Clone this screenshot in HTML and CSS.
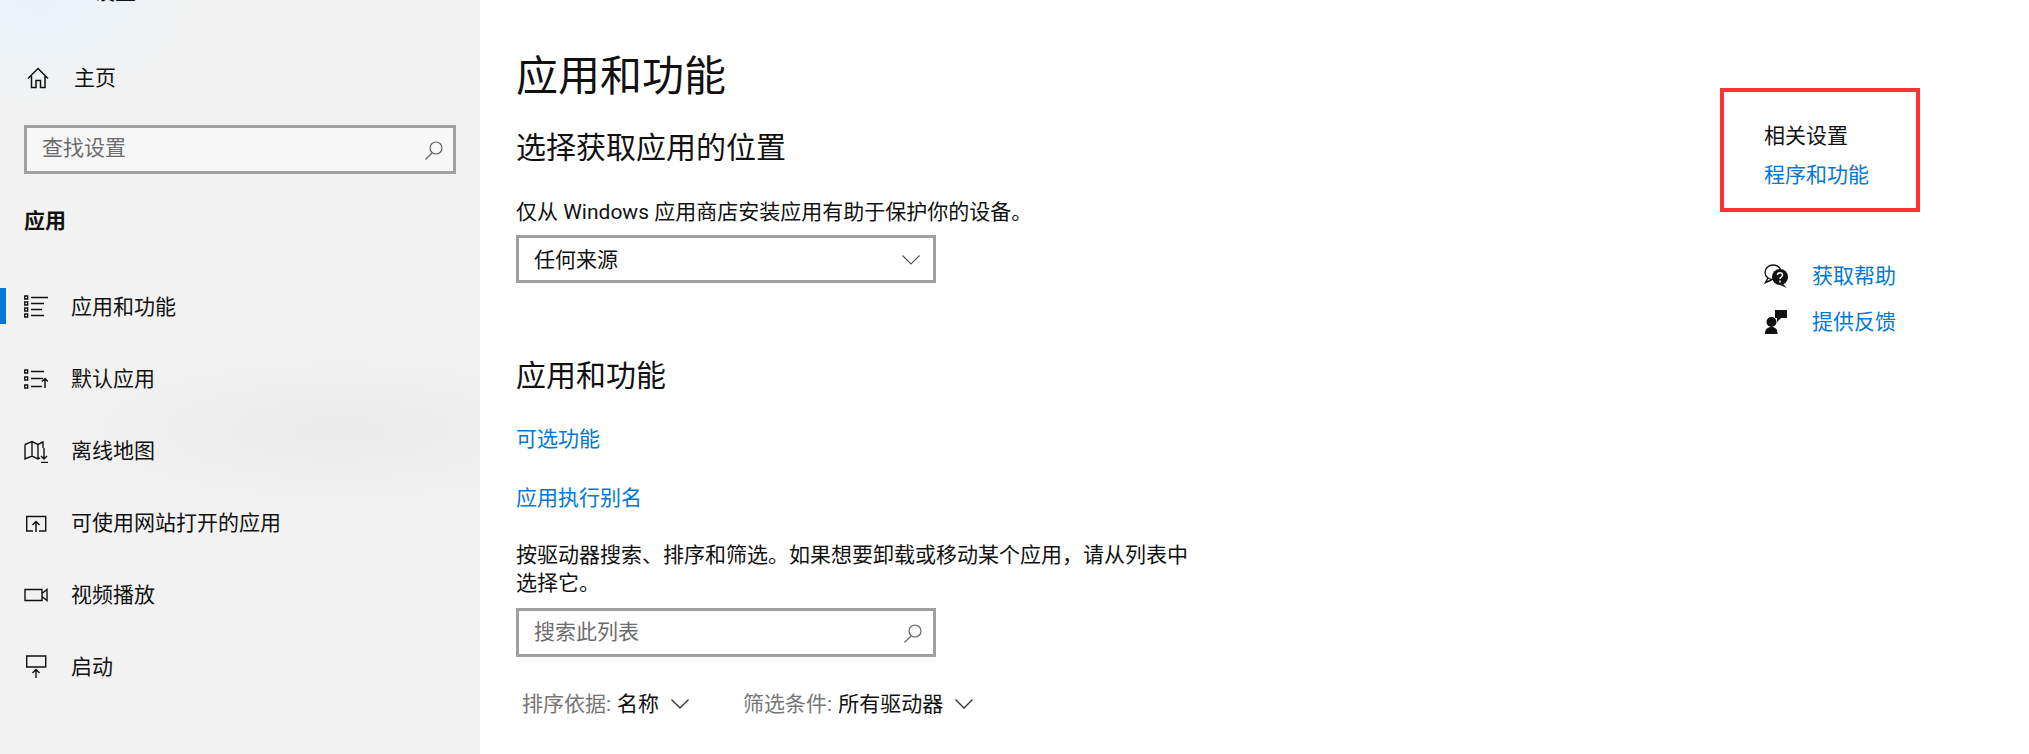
FILE: index.html
```html
<!DOCTYPE html>
<html lang="zh-CN">
<head>
<meta charset="UTF-8">
<meta name="viewport" content="width=device-width, initial-scale=1.0">
<title>应用和功能</title>
<link rel="stylesheet" href="styles.css">
</head>
<body>
<div class="window">
  <div class="sidebar">
    <div class="top-bar">
      <svg class="back-icon" width="20" height="20" viewBox="0 0 20 20"><path d="M9 3 2 10l7 7M2 10h16" fill="none" stroke="#111" stroke-width="1.5"/></svg>
      <span>设置</span>
    </div>
    <div class="home-row">
      <svg class="nav-icon" width="24" height="24" viewBox="0 0 24 24"><path d="M2 12.500 12 2.500l10 10M5.500 10v11.500h4.500v-7h4.500v7h4.500V10" fill="none" stroke="#111" stroke-width="1.500"/></svg>
      <span>主页</span>
    </div>
    <div class="search-box side-search">
      <span class="placeholder">查找设置</span>
      <svg width="20" height="20" viewBox="0 0 20 20"><circle cx="12" cy="8" r="6" fill="none" stroke="#666" stroke-width="1.200"/><path d="M8 13 1.500 19.500" stroke="#666" stroke-width="1.200"/></svg>
    </div>
    <div class="section-label">应用</div>
    <div class="nav-list">
      <div class="nav-item active">
        <svg class="nav-icon" width="24" height="24" viewBox="0 0 24 24"><path d="M.7 1h3v3h-3zM.7 7h3v3h-3zM.7 13h3v3h-3zM.7 19h3v3h-3z" fill="none" stroke="#111" stroke-width="1.300"/><path d="M7 2.500h17M7 8.500h13M7 14.500h11M7 20.500h13" stroke="#111" stroke-width="1.300"/></svg>
        <span>应用和功能</span>
      </div>
      <div class="nav-item">
        <svg class="nav-icon" width="24" height="24" viewBox="0 0 24 24"><path d="M.7 3h3v3h-3zM.7 10h3v3h-3zM.7 18h3v3h-3z" fill="none" stroke="#111" stroke-width="1.300"/><path d="M7 4.500h13M7 11.500h12M7 19.500h11" stroke="#111" stroke-width="1.300"/><path d="M21 21V11.500M18 14.500l3-3 3 3" fill="none" stroke="#111" stroke-width="1.500"/></svg>
        <span>默认应用</span>
      </div>
      <div class="nav-item">
        <svg class="nav-icon" width="24" height="24" viewBox="0 0 24 24"><path d="M1 5.500 8 2.500l6 3 5-2.500v6M1 5.500v14.500l7-3 6 3 2-1M8 2.500v14.500M14 5.500v14.500" fill="none" stroke="#111" stroke-width="1.400"/><path d="M20 9v11M17 17l3 3 3-3M17 23.500h7" fill="none" stroke="#111" stroke-width="1.400"/></svg>
        <span>离线地图</span>
      </div>
      <div class="nav-item">
        <svg class="nav-icon" width="24" height="24" viewBox="0 0 24 24"><path d="M9 20H2.700V5.500h19V20H15" fill="none" stroke="#111" stroke-width="1.400"/><path d="M12 21V11M8.500 14l3.500-3.500 3.500 3.500" fill="none" stroke="#111" stroke-width="1.500"/></svg>
        <span>可使用网站打开的应用</span>
      </div>
      <div class="nav-item">
        <svg class="nav-icon" width="24" height="24" viewBox="0 0 24 24"><path d="M1 6.500h17v11H1zM18 10.500l5-4v11l-5-4" fill="none" stroke="#111" stroke-width="1.400"/></svg>
        <span>视频播放</span>
      </div>
      <div class="nav-item">
        <svg class="nav-icon" width="24" height="24" viewBox="0 0 24 24"><path d="M2.700 1h19v11h-19zM12 23V15M8.500 18l3.500-3.500 3.500 3.500" fill="none" stroke="#111" stroke-width="1.400"/></svg>
        <span>启动</span>
      </div>
    </div>
  </div>

  <div class="main">
    <div class="content">
      <h1>应用和功能</h1>
      <h2 class="sub-first">选择获取应用的位置</h2>
      <p class="source-note">仅从 Windows 应用商店安装应用有助于保护你的设备。</p>
      <div class="select-box">
        <span>任何来源</span>
        <svg width="18" height="10" viewBox="0 0 18 10"><path d="M.5.500 9 9 17.500.500" fill="none" stroke="#555" stroke-width="1.200"/></svg>
      </div>
      <h2 class="sub-second">应用和功能</h2>
      <a class="link first-link">可选功能</a>
      <a class="link second-link">应用执行别名</a>
      <p class="filter-note">按驱动器搜索、排序和筛选。如果想要卸载或移动某个应用，请从列表中选择它。</p>
      <div class="search-box list-search">
        <span class="placeholder">搜索此列表</span>
        <svg width="20" height="20" viewBox="0 0 20 20"><circle cx="12" cy="8" r="6" fill="none" stroke="#666" stroke-width="1.200"/><path d="M8 13 1.500 19.500" stroke="#666" stroke-width="1.200"/></svg>
      </div>
      <div class="sort-row">
        <div class="sort-item">
          <span class="sort-label">排序依据:</span>
          <span>名称</span>
          <svg width="18" height="10" viewBox="0 0 18 10"><path d="M.5.500 9 9 17.500.500" fill="none" stroke="#333" stroke-width="1.300"/></svg>
        </div>
        <div class="sort-item">
          <span class="sort-label">筛选条件:</span>
          <span>所有驱动器</span>
          <svg width="18" height="10" viewBox="0 0 18 10"><path d="M.5.500 9 9 17.500.500" fill="none" stroke="#333" stroke-width="1.300"/></svg>
        </div>
      </div>
    </div>

    <div class="aside">
      <div class="related">
        <div class="related-title">相关设置</div>
        <a class="link">程序和功能</a>
      </div>
      <div class="help-row help-first">
        <svg width="24" height="24" viewBox="0 0 24 24"><path d="M10 15.500H9.500C4.500 15.500 1 12.500 1 8.500S4.500 1 9 1c3.500 0 6.500 2 7.500 4.500M4 14l-2.500 4.500 6-2.500" fill="none" stroke="#111" stroke-width="1.400"/><circle cx="16" cy="13" r="8" fill="#111"/><path d="M19 20l4 4-7-3z" fill="#111"/><path d="M13.500 11c0-3 5-3 5 0 0 2-2.500 2-2.500 4M16 16.500v2" fill="none" stroke="#fff" stroke-width="1.500"/></svg>
        <a class="link">获取帮助</a>
      </div>
      <div class="help-row help-second">
        <svg width="24" height="24" viewBox="0 0 24 24"><circle cx="7.500" cy="12" r="5" fill="#111"/><path d="M1 24c0-5 2.500-7 6.500-7s6 2 6 7z" fill="#111"/><path d="M11 0h12v8h-6l-4 4V8h-2z" fill="#111"/></svg>
        <a class="link">提供反馈</a>
      </div>
    </div>
  </div>
</div>
</body>
</html>
```

FILE: styles.css
```css
* {
  box-sizing: border-box;
}

body {
  margin: 0;
  height: 754px;
  overflow: hidden;
  background-color: #fff;
  color: #111;
  font-family: Roboto, "Noto Sans CJK SC", sans-serif;
  font-size: 21px;
  line-height: 28px;
}

h1, h2, p {
  margin: 0;
  font-weight: 400;
}

.window {
  display: flex;
  height: 754px;
}

/* left nav */
.sidebar {
  width: 480px;
  flex-shrink: 0;
  background-color: #f2f2f2;
  background-image:
    radial-gradient(ellipse 160px 110px at 40px 0, #e9f2f9, transparent),
    radial-gradient(ellipse 320px 90px at 340px 430px, #ebebeb, transparent);
}

.top-bar {
  display: flex;
  align-items: center;
  gap: 49px;
  height: 28px;
  margin-top: -22px;
  padding-left: 25px;
}

.home-row {
  display: flex;
  align-items: center;
  gap: 24px;
  height: 56px;
  margin-top: 44px;
  padding-left: 26px;
}

.side-search {
  width: 432px;
  margin: 19px 0 0 24px;
  padding: 0 9px 0 15px;
  background-color: #f7f7f7;
  border-color: #8f8f8f;
}

.section-label {
  margin: 33px 0 0 24px;
  font-weight: 700;
}

.nav-list {
  margin-top: 36px;
}

.nav-item {
  position: relative;
  display: flex;
  align-items: center;
  gap: 23px;
  height: 72px;
  padding-left: 24px;
}

.nav-item.active::before {
  content: "";
  position: absolute;
  left: 0;
  top: 17px;
  width: 6px;
  height: 36px;
  background-color: #0078d7;
}

.nav-icon {
  flex-shrink: 0;
}

/* main column */
.main {
  flex: 1;
  display: flex;
  justify-content: space-between;
  padding: 0 109px 0 36px;
}

.content {
  width: 672px;
}

h1 {
  margin-top: 49px;
  font-size: 42px;
  line-height: 56px;
}

h2 {
  font-size: 30px;
  line-height: 40px;
}

.sub-first {
  margin-top: 23px;
}

.source-note {
  margin-top: 30px;
}

.select-box {
  display: flex;
  align-items: center;
  justify-content: space-between;
  width: 420px;
  height: 48px;
  margin-top: 9px;
  padding: 2px 13px 0 15px;
  border: 3px solid #a0a0a0;
}

.sub-second {
  margin-top: 73px;
}

.link {
  display: block;
  color: #0078d7;
}

.first-link {
  margin-top: 29px;
}

.second-link {
  margin-top: 31px;
}

.filter-note {
  margin-top: 29px;
}

.search-box {
  display: flex;
  align-items: center;
  justify-content: space-between;
  height: 49px;
  border: 3px solid #a0a0a0;
}

.list-search {
  width: 420px;
  margin-top: 11px;
  padding: 0 10px 0 15px;
}

.placeholder {
  padding-bottom: 3px;
  color: #6d6d6d;
}

.list-search .placeholder {
  padding-bottom: 1px;
}

.sort-row {
  display: flex;
  gap: 54px;
  height: 28px;
  margin: 33px 0 0 6px;
}

.sort-item {
  display: flex;
  align-items: center;
  gap: 6px;
  white-space: nowrap;
}

.sort-item svg {
  margin-left: 6px;
}

.sort-label {
  color: #767676;
}

/* right column */
.aside {
  width: 200px;
}

.related {
  height: 124px;
  margin-top: 88px;
  padding: 30px 0 0 40px;
  border: 4px solid #ff3333;
}

.related-title {
  margin-bottom: 11px;
}

.help-row {
  display: flex;
  align-items: center;
  gap: 24px;
  height: 28px;
  padding-left: 44px;
}

.help-first {
  margin-top: 50px;
}

.help-second {
  margin-top: 18px;
}
```
